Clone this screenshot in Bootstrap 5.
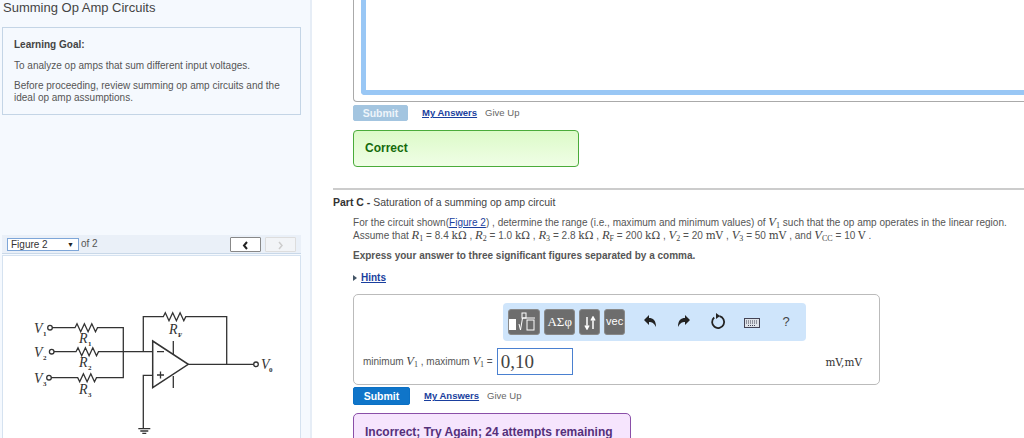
<!DOCTYPE html>
<html lang="en"><head><meta charset="utf-8"><title>Summing Op Amp Circuits</title>
<link rel="stylesheet" href="https://cdn.jsdelivr.net/npm/bootstrap@5.3.0/dist/css/bootstrap.min.css">
<style>
html,body{height:438px;overflow:hidden;background:#fff}
body{font-family:"Liberation Sans",Arial,sans-serif;font-size:10px;line-height:12px;color:#555}
.pg{height:438px;overflow:hidden}
.side{width:312px;flex:none;height:438px;background:#f5f9fe;border-right:2px solid #e6edf6;padding-right:9px;padding-left:2px;overflow:hidden}
.ttl{font-size:13px;line-height:16px;color:#444;margin:0;padding-left:1px;height:27px;font-weight:400}
.goal{height:88px;border:1px solid #c4d5e6;padding:10px 11px;font-size:10px;line-height:12px;color:#555;margin-bottom:120px}
.goal p{margin:0 0 8px}
.goal .gh{font-weight:700;color:#444;margin-bottom:9px;line-height:13px}
.figbar{height:19px;background:#eaf0f8;border-bottom:1px solid #c9d8e8;padding:0 5px}
.figsel{width:72px;height:13px;border:1px solid #7ea6d8;background:#fff;font-size:10px;line-height:11px;color:#333;padding:0 4px 0 3px}
.figsel b{font-size:7px;font-weight:400;color:#222}
.figof{font-size:10px;color:#555;margin-left:2px}
.navb{width:31px;height:15px;padding:0;border:1px solid #888;border-radius:1px;background:#fff;line-height:10px;margin-top:1px}
.navb.off{border-color:#ddd;background:#f2f4f7;margin-left:4px}
.figbox{height:184px;border:1px solid #d5e2f0;background:#fff;margin-top:1px}
.figbox svg{display:block}
.main{flex:1;min-width:0;padding-left:21px;overflow:hidden}
.ind{margin-left:20px}
.oldbox{height:102px;border:1px solid #aaa;border-top:0;border-right:0;border-bottom-left-radius:4px;padding-left:7px;margin-right:-5px}
.oldin{height:95px;border-left:5px solid #99c7f5;border-bottom:5px solid #99c7f5;border-bottom-left-radius:4px}
.act{height:16px;margin-top:3px;font-size:9.5px;line-height:16px}
.btn.subm{width:55px;height:16px;padding:0;font-size:10.5px;font-weight:700;line-height:14px;color:#fff;border-radius:2px;border:1px solid #0a70c5;background:#0f75c9}
.btn.subm.dim,.btn.subm.dim:disabled{background:#a3c5e0;border-color:#a3c5e0;opacity:1;color:#eef4fa}
.myans{font-weight:700;color:#1a3f9e;text-decoration:underline;margin-left:14px;font-size:9.5px}
.giveup{color:#666;margin-left:8px;font-size:9.5px}
.okbox{width:226px;height:37px;margin-top:9px;border:1px solid #4aab3a;border-radius:4px;background:linear-gradient(#dcfac8,#f0fee6);color:#146a0c;font-size:12px;font-weight:700;line-height:34px;padding-left:11px}
.sep{height:2px;background:#ccc;margin:21px 0 0;opacity:1;border:0}
.parth{font-size:10.5px;line-height:13px;color:#444;margin:6px 0 0}
.parth b{color:#333}
.qt{font-size:10px;line-height:12px;color:#555;margin:7px 0 0;white-space:nowrap;letter-spacing:.02px}
.qt a{color:#1a3f9e}
.ms{font-family:"Liberation Serif",serif;font-size:12.5px;color:#444;font-style:italic}
.ms sub{font-size:8px;font-style:normal;bottom:-.2em}
.mu{font-family:"DejaVu Serif",serif;font-size:10.5px;color:#444}
.expr{font-weight:700;font-size:10px;color:#555;margin:8px 0 0;line-height:12px}
.hints{margin:10px 0 0;font-size:10px;line-height:12px}
.hints a{color:#1a3f9e;font-weight:700;font-size:10px}
.tri{display:inline-block;border-left:4px solid #456;border-top:3px solid transparent;border-bottom:3px solid transparent;margin-right:4px}
.ansbox{width:527px;height:91px;margin-top:10px;border:1px solid #bbb;border-radius:5px;padding:8px 0 0 9px}
.tbar{width:303px;height:38px;margin-left:140px;background:#cfe5fb;border-radius:4px;padding:6px 5px;gap:4px;opacity:1}
.tbtn{height:26px;background:#6d6d6d;border-radius:3px;color:#fff;border:1px solid #888;padding:0;font-family:"Liberation Serif",serif;font-size:13px;line-height:24px}
.tic{width:30px;text-align:center;flex:none}
.ansrow{margin-top:7px;height:27px;font-size:10px}
.inpt{width:76px;height:27px;border:1px solid #4a80d0;border-radius:0;padding:0 0 0 3px;margin-left:4px;font-family:"Liberation Serif",serif;font-size:19px;color:#444;line-height:25px;background:#fff}
.unit{margin-left:auto;margin-right:17px;font-family:"DejaVu Serif",serif;font-size:10.5px;color:#333}
.act2{height:18px;margin-top:2px;line-height:18px;font-size:9.5px}
.act2 .subm{width:57px;height:18px;line-height:16px}
.nobox{width:278px;height:40px;margin-top:8px;border:1px solid #8a4fa8;border-radius:5px;background:#f6e5fd;color:#55307a;font-size:12px;font-weight:700;line-height:36px;padding-left:11px}
</style></head><body>
<div class="d-flex pg">
<aside class="side">
<h1 class="ttl">Summing Op Amp Circuits</h1>
<div class="goal">
<p class="gh">Learning Goal:</p>
<p>To analyze op amps that sum different input voltages.</p>
<p>Before proceeding, review summing op amp circuits and the ideal op amp assumptions.</p>
</div>
<div class="figbar d-flex align-items-center">
<div class="figsel d-flex justify-content-between align-items-center"><span>Figure 2</span><b>▼</b></div>
<span class="figof">of 2</span>
<button class="navb btn ms-auto" type="button"><svg width="7" height="9" viewBox="0 0 7 9"><path d="M5 1L2 4.500L5 8" fill="none" stroke="#222" stroke-width="2"/></svg></button>
<button class="navb off btn" type="button"><svg width="7" height="9" viewBox="0 0 7 9"><path d="M2 1L5 4.500L2 8" fill="none" stroke="#ccc" stroke-width="1.500"/></svg></button>
</div>
<div class="figbox">
<svg width="298" height="183" viewBox="3 255 298 183" fill="none" stroke="#333" stroke-width="1.300">
<circle cx="50" cy="326.700" r="2.300"/><circle cx="51.700" cy="350.700" r="2.300"/><circle cx="49" cy="376.700" r="2.300"/><circle cx="256" cy="363.300" r="2.300"/>
<path d="M52 326.700H75l2-4 3.700 8 3.700-8 3.700 8 3.700-8 3.700 8 2-4H123.300V376.700H98.500l-2-0-2 4-3.700-8-3.700 8-3.700-8-3.700 8-2-4H51"/>
<path d="M54 350.700H76l2-4 3.700 8 3.700-8 3.700 8 3.700-8 3.700 8 2-4H152.700"/>
<path d="M143.300 350.700V315.700H163.300l2-4 3.700 8 3.700-8 3.700 8 3.700-8 3.700 8 2-4H226.700V363.300"/>
<path d="M188.300 363.300H253.700"/>
<path d="M152.700 340V386.700L188.300 363.300Z" stroke-width="1.500"/>
<path d="M173.300 340V353M173.300 375V387M157 350.700H164M157 374H164M160.500 370.500V377.500"/>
<path d="M152.700 374.300H143.300V427.700M138.300 427.700H150.300M140.300 430H148.300M142.300 432.300H146.300"/>
<g fill="#333" stroke="none" font-family="Liberation Serif,serif" font-style="italic" font-size="14">
<text x="34" y="332">V</text><text x="34" y="356">V</text><text x="34" y="382">V</text><text x="261" y="368">V</text>
<text x="79" y="342">R</text><text x="79" y="366">R</text><text x="79" y="393">R</text><text x="169" y="333">R</text>
<g font-size="7" font-style="normal" font-weight="700"><text x="43" y="335">1</text><text x="43" y="359">2</text><text x="43" y="385">3</text><text x="269" y="371">0</text><text x="88" y="345">1</text><text x="88" y="369">2</text><text x="88" y="396">3</text><text x="178" y="336">F</text></g>
</g>
</svg>
</div>
</aside>
<main class="main">
<div class="oldbox ind"><div class="oldin"></div></div>
<div class="act ind d-flex align-items-center"><button class="btn subm dim" type="button" disabled>Submit</button><a class="myans" href="#">My Answers</a><span class="giveup">Give Up</span></div>
<div class="okbox ind">Correct</div>
<hr class="sep">
<p class="parth"><b>Part C -</b> Saturation of a summing op amp circuit</p>
<div class="ind">
<p class="qt mb-0">For the circuit shown(<a href="#">Figure 2</a>) , determine the range (i.e., maximum and minimum values) of <span class="ms">V<sub>1</sub></span> such that the op amp operates in the linear region.<br>Assume that <span class="ms">R<sub>1</sub></span> = 8.4 <span class="mu">kΩ</span> , <span class="ms">R<sub>2</sub></span> = 1.0 <span class="mu">kΩ</span> , <span class="ms">R<sub>3</sub></span> = 2.8 <span class="mu">kΩ</span> , <span class="ms">R<sub>F</sub></span> = 200 <span class="mu">kΩ</span> , <span class="ms">V<sub>2</sub></span> = 20 <span class="mu">mV</span> , <span class="ms">V<sub>3</sub></span> = 50 <span class="mu">mV</span> , and <span class="ms">V<sub>CC</sub></span> = 10 <span class="mu">V</span> .</p>
<p class="expr">Express your answer to three significant figures separated by a comma.</p>
<p class="hints"><span class="tri"></span><a href="#">Hints</a></p>
<div class="ansbox">
<div class="tbar d-flex align-items-start">
<div class="tbtn text-center d-flex align-items-center justify-content-center flex-none" style="width:38px"><svg width="30" height="20" viewBox="0 0 30 20" fill="none" stroke="#fff"><rect x="0" y="7" width="7" height="11" fill="#fff" stroke="none"/><rect x="13" y="1" width="4" height="5"/><path d="M10 12l1.500 6 2-12H26"/><rect x="18" y="8" width="7" height="10"/></svg></div>
<div class="tbtn text-center" style="width:38px">ΑΣφ</div>
<div class="tbtn text-center" style="width:25px"><svg width="14" height="14" viewBox="0 0 14 14" fill="none" stroke="#fff" stroke-width="1.500"><path d="M4 1V12M2 9.500L4 13L6 9.500M10 13V2M8 4.500L10 1L12 4.500"/></svg></div>
<div class="tbtn text-center" style="width:25px;font-family:'Liberation Sans',sans-serif;font-size:11px;line-height:22px">vec</div>
<div class="tic" style="margin-left:6px"><svg width="14" height="26" viewBox="0 0 14 26"><path d="M1 11L6 6V9C10 9 13 11 13 18C11 14 9 13 6 13V16Z" fill="#222"/></svg></div>
<div class="tic"><svg width="14" height="26" viewBox="0 0 14 26"><path d="M13 11L8 6V9C4 9 1 11 1 18C3 14 5 13 8 13V16Z" fill="#222"/></svg></div>
<div class="tic"><svg width="16" height="26" viewBox="0 0 16 26" fill="none"><path d="M9.500 7.200A6 6 0 1 1 4.200 8.500" stroke="#222" stroke-width="1.800"/><path d="M6 4L10 7L6 10Z" fill="#222"/></svg></div>
<div class="tic"><svg width="16" height="26" viewBox="0 0 16 26" fill="none"><rect x=".5" y="9.500" width="15" height="9" fill="#dfe3e8" stroke="#445"/><path d="M2 12H14M2 14H14M4 16.500H12" stroke="#445" stroke-dasharray="1 1"/></svg></div>
<div class="tic" style="font-size:13px;line-height:26px;color:#444">?</div>
</div>
<div class="ansrow d-flex align-items-center"><span>minimum <span class="ms">V<sub>1</sub></span> , maximum <span class="ms">V<sub>1</sub></span> =</span><input class="form-control inpt" value="0,10" aria-label="answer"><span class="unit">mV,mV</span></div>
</div>
<div class="act2 d-flex align-items-center"><button class="btn subm" type="button">Submit</button><a class="myans" href="#">My Answers</a><span class="giveup">Give Up</span></div>
<div class="nobox">Incorrect; Try Again; 24 attempts remaining</div>
</div>
</main>
</div>
</body></html>
